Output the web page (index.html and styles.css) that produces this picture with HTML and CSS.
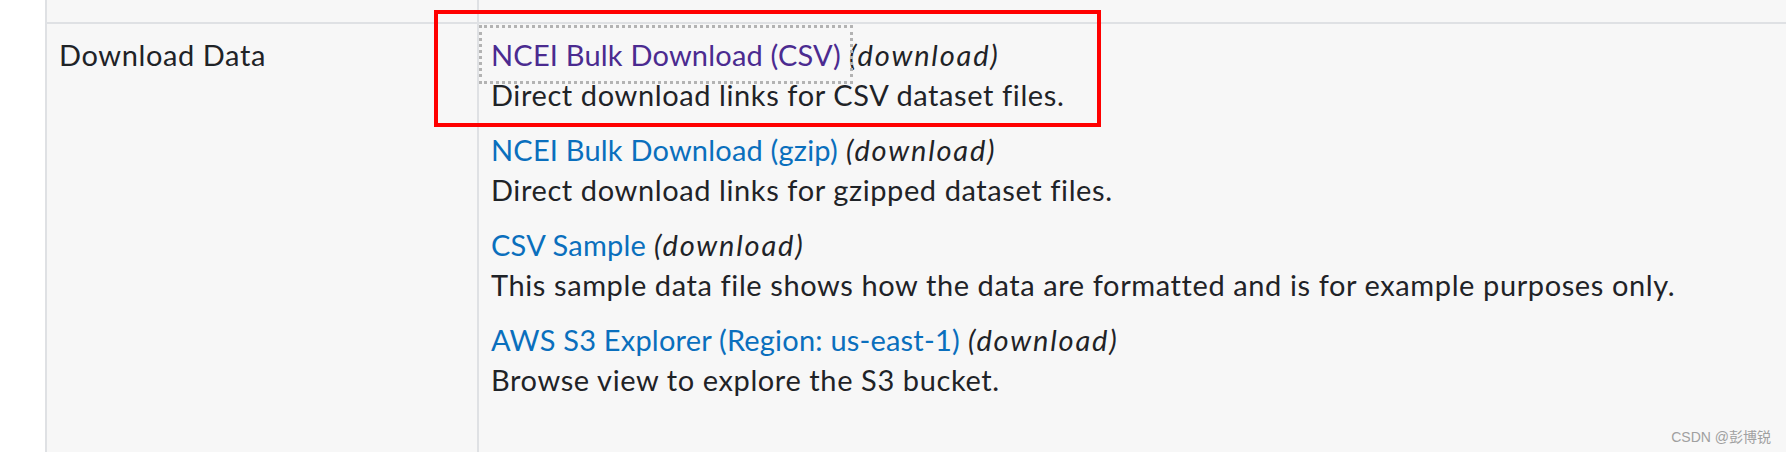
FILE: index.html
```html
<!DOCTYPE html>
<html lang="en">
<head>
  <meta charset="UTF-8">
  <title>Download Data</title>
  <link rel="stylesheet" href="styles.css">
</head>
<body>
  <div class="page">
    <table class="info">
      <tr class="prev">
        <th></th>
        <td></td>
      </tr>
      <tr>
        <th>Download Data</th>
        <td>
          <ul class="links">
            <li>
              <a href="#" class="visited focused">NCEI Bulk Download (CSV)</a> <em>(download)</em><br>
              Direct download links for CSV dataset files.
            </li>
            <li>
              <a href="#">NCEI Bulk Download (gzip)</a> <em>(download)</em><br>
              Direct download links for gzipped dataset files.
            </li>
            <li>
              <a href="#">CSV Sample</a> <em>(download)</em><br>
              This sample data file shows how the data are formatted and is for example purposes only.
            </li>
            <li>
              <a href="#">AWS S3 Explorer (Region: us-east-1)</a> <em>(download)</em><br>
              Browse view to explore the S3 bucket.
            </li>
          </ul>
        </td>
      </tr>
    </table>

    <div class="highlight"></div>
    <div class="watermark">CSDN @彭博锐</div>
  </div>
</body>
</html>
```

FILE: styles.css
```css
html, body {
  margin: 0;
  padding: 0;
  background: #fff;
}

.page {
  position: relative;
  width: 1786px;
  height: 452px;
  overflow: hidden;
  padding-left: 45px;
  box-sizing: border-box;
  font-family: Lato, "Open Sans", sans-serif;
  font-size: 29px;
  letter-spacing: 0.6px;
  color: #1f2327;
}

.info {
  border-collapse: collapse;
  width: 100%;
  background: #f7f7f7;
}

.info th,
.info td {
  border-left: 2px solid #dfe1e4;
  padding: 11px 12px 0;
  text-align: left;
  vertical-align: top;
  font-weight: normal;
  line-height: 40px;
}

.info th {
  width: 406px;
}

.prev th,
.prev td {
  height: 22px;
  padding: 0;
  border-bottom: 2px solid #dfe1e4;
}

.info tr:last-child td,
.info tr:last-child th {
  height: 440px;
}

.links {
  list-style: none;
  margin: 0;
  padding: 0;
}

.links li {
  margin-bottom: 15px;
}

.links a {
  color: #0a6fbd;
  text-decoration: none;
  letter-spacing: 0.2px;
}

.links a.visited {
  color: #4b2b90;
}

.links a.focused {
  outline: 3px dotted #b3b3b3;
  outline-offset: 9px;
}

.links em {
  color: #1f2327;
  letter-spacing: 1.8px;
}

.highlight {
  position: absolute;
  left: 434px;
  top: 10px;
  width: 667px;
  height: 117px;
  border: 4px solid #ff0000;
  box-sizing: border-box;
}

.watermark {
  position: absolute;
  right: 15px;
  bottom: 6px;
  font-family: "Liberation Sans", "Noto Sans CJK SC", sans-serif;
  font-size: 14px;
  letter-spacing: 0;
  color: #a0a0a0;
}
```
